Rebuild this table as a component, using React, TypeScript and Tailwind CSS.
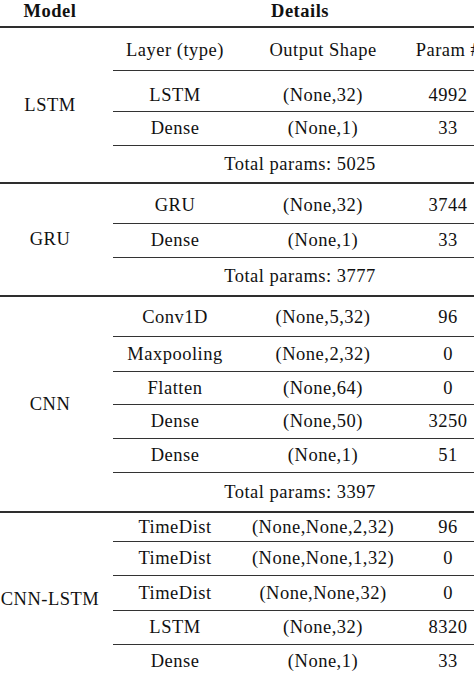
type Row = { layer: string; shape: string; params: string; h: string; pad?: string };
type Section = { model: string; header?: boolean; rows: Row[]; total?: string; totalH?: string };

const sections: Section[] = [
  {
    model: "LSTM",
    header: true,
    rows: [
      { layer: "LSTM", shape: "(None,32)", params: "4992", h: "h-[41px]", pad: "pt-[8px]" },
      { layer: "Dense", shape: "(None,1)", params: "33", h: "h-[34px]" },
    ],
    total: "5025",
    totalH: "h-[36px]",
  },
  {
    model: "GRU",
    rows: [
      { layer: "GRU", shape: "(None,32)", params: "3744", h: "h-[40px]", pad: "pt-[4px]" },
      { layer: "Dense", shape: "(None,1)", params: "33", h: "h-[34px]" },
    ],
    total: "3777",
    totalH: "h-[37px]",
  },
  {
    model: "CNN",
    rows: [
      { layer: "Conv1D", shape: "(None,5,32)", params: "96", h: "h-[40px]", pad: "pt-[1px]" },
      { layer: "Maxpooling", shape: "(None,2,32)", params: "0", h: "h-[35px]" },
      { layer: "Flatten", shape: "(None,64)", params: "0", h: "h-[33px]" },
      { layer: "Dense", shape: "(None,50)", params: "3250", h: "h-[34px]" },
      { layer: "Dense", shape: "(None,1)", params: "51", h: "h-[34px]" },
    ],
    total: "3397",
    totalH: "h-[38px]",
  },
  {
    // last block runs past the bottom of the picture, so no total row here
    model: "CNN-LSTM",
    rows: [
      { layer: "TimeDist", shape: "(None,None,2,32)", params: "96", h: "h-[29px]" },
      { layer: "TimeDist", shape: "(None,None,1,32)", params: "0", h: "h-[34px]" },
      { layer: "TimeDist", shape: "(None,None,32)", params: "0", h: "h-[35px]" },
      { layer: "LSTM", shape: "(None,32)", params: "8320", h: "h-[34px]" },
      { layer: "Dense", shape: "(None,1)", params: "33", h: "h-[40px]", pad: "pb-[6px]" },
    ],
  },
];

const cols = "grid grid-cols-[124px_172px_78px] items-center text-center";

export default function App() {
  return (
    <div className="w-[474px] h-[683px] overflow-hidden bg-white">
      <div
        className="w-[487px] text-[18.5px] leading-none tracking-[0.5px] text-[#111]"
        style={{ fontFamily: '"Liberation Serif", "Times New Roman", serif' }}
      >
        {/* Header */}
        <div className="grid grid-cols-[113px_374px] h-[28px] items-center pb-[4px] border-b-2 border-[#2e2e2e] font-bold">
          <div className="text-center pr-[13px]">Model</div>
          <div className="text-center">Details</div>
        </div>

        {sections.map((s) => (
          <div key={s.model} className="grid grid-cols-[113px_374px] border-b-2 border-[#2e2e2e]">
            <div className="flex items-center justify-center pr-[13px] whitespace-nowrap">{s.model}</div>
            <div className="flex flex-col">
              {s.header && (
                <div className={`${cols} h-[43px] pt-[2px] border-b border-[#333]`}>
                  <div>Layer (type)</div>
                  <div>Output Shape</div>
                  <div className="whitespace-nowrap">Param #</div>
                </div>
              )}
              {s.rows.map((r, i) => (
                <div key={i} className={`${cols} ${r.h} ${r.pad ?? ""} border-b border-[#333]`}>
                  <div>{r.layer}</div>
                  <div className="whitespace-nowrap">{r.shape}</div>
                  <div>{r.params}</div>
                </div>
              ))}
              {s.total && (
                <div className={`${s.totalH} flex items-center justify-center`}>Total params: {s.total}</div>
              )}
            </div>
          </div>
        ))}
      </div>
    </div>
  );
}
